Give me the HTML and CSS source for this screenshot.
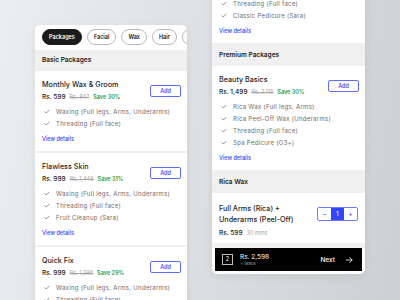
FILE: index.html
```html
<!DOCTYPE html>
<html lang="en">
<head>
    <meta charset="UTF-8">
    <meta name="viewport" content="width=device-width, initial-scale=1.0">
    <title>Salon Packages</title>
    <link rel="stylesheet" href="styles.css">
</head>
<body>
<div class="stage">

    <!-- Left screen: package list -->
    <div class="phone phone-left">
        <div class="chips">
            <span class="chip chip-active">Packages</span>
            <span class="chip">Facial</span>
            <span class="chip">Wax</span>
            <span class="chip">Hair</span>
            <span class="chip">Nails</span>
        </div>

        <div class="section-head">Basic Packages</div>

        <div class="pkg">
            <div class="pkg-top">
                <div class="pkg-info">
                    <div class="pkg-name">Monthly Wax &amp; Groom</div>
                    <div class="price"><span class="now">Rs. 599</span><span class="was">Rs. 847</span><span class="save">Save 30%</span></div>
                </div>
                <button class="add">Add</button>
            </div>
            <ul class="items">
                <li><svg class="tick" viewBox="0 0 8 6"><polyline points="1,3 3,5 7,1"/></svg>Waxing (Full legs, Arms, Underarms)</li>
                <li><svg class="tick" viewBox="0 0 8 6"><polyline points="1,3 3,5 7,1"/></svg>Threading (Full face)</li>
            </ul>
            <a class="details" href="#">View details</a>
        </div>

        <div class="pkg">
            <div class="pkg-top">
                <div class="pkg-info">
                    <div class="pkg-name">Flawless Skin</div>
                    <div class="price"><span class="now">Rs. 999</span><span class="was">Rs. 1,446</span><span class="save">Save 31%</span></div>
                </div>
                <button class="add">Add</button>
            </div>
            <ul class="items">
                <li><svg class="tick" viewBox="0 0 8 6"><polyline points="1,3 3,5 7,1"/></svg>Waxing (Full legs, Arms, Underarms)</li>
                <li><svg class="tick" viewBox="0 0 8 6"><polyline points="1,3 3,5 7,1"/></svg>Threading (Full face)</li>
                <li><svg class="tick" viewBox="0 0 8 6"><polyline points="1,3 3,5 7,1"/></svg>Fruit Cleanup (Sara)</li>
            </ul>
            <a class="details" href="#">View details</a>
        </div>

        <div class="pkg">
            <div class="pkg-top">
                <div class="pkg-info">
                    <div class="pkg-name">Quick Fix</div>
                    <div class="price"><span class="now">Rs. 999</span><span class="was">Rs. 1,396</span><span class="save">Save 29%</span></div>
                </div>
                <button class="add">Add</button>
            </div>
            <ul class="items">
                <li><svg class="tick" viewBox="0 0 8 6"><polyline points="1,3 3,5 7,1"/></svg>Waxing (Full legs, Arms, Underarms)</li>
                <li><svg class="tick" viewBox="0 0 8 6"><polyline points="1,3 3,5 7,1"/></svg>Threading (Full face)</li>
                <li><svg class="tick" viewBox="0 0 8 6"><polyline points="1,3 3,5 7,1"/></svg>Classic Pedicure (Sara)</li>
            </ul>
            <a class="details" href="#">View details</a>
        </div>
    </div>

    <!-- Right screen: scrolled down, with cart bar -->
    <div class="phone phone-right">
        <div class="pkg">
            <div class="pkg-top">
                <div class="pkg-info">
                    <div class="pkg-name">Glow Up</div>
                    <div class="price"><span class="now">Rs. 1,199</span><span class="was">Rs. 1,690</span><span class="save">Save 29%</span></div>
                </div>
                <button class="add">Add</button>
            </div>
            <ul class="items">
                <li><svg class="tick" viewBox="0 0 8 6"><polyline points="1,3 3,5 7,1"/></svg>Waxing (Full legs, Arms, Underarms)</li>
                <li><svg class="tick" viewBox="0 0 8 6"><polyline points="1,3 3,5 7,1"/></svg>Threading (Full face)</li>
                <li><svg class="tick" viewBox="0 0 8 6"><polyline points="1,3 3,5 7,1"/></svg>Classic Pedicure (Sara)</li>
            </ul>
            <a class="details" href="#">View details</a>
        </div>

        <div class="section-head">Premium Packages</div>

        <div class="pkg">
            <div class="pkg-top">
                <div class="pkg-info">
                    <div class="pkg-name">Beauty Basics</div>
                    <div class="price"><span class="now">Rs. 1,499</span><span class="was">Rs. 2,115</span><span class="save">Save 30%</span></div>
                </div>
                <button class="add">Add</button>
            </div>
            <ul class="items">
                <li><svg class="tick" viewBox="0 0 8 6"><polyline points="1,3 3,5 7,1"/></svg>Rica Wax (Full legs, Arms)</li>
                <li><svg class="tick" viewBox="0 0 8 6"><polyline points="1,3 3,5 7,1"/></svg>Rica Peel-Off Wax (Underarms)</li>
                <li><svg class="tick" viewBox="0 0 8 6"><polyline points="1,3 3,5 7,1"/></svg>Threading (Full face)</li>
                <li><svg class="tick" viewBox="0 0 8 6"><polyline points="1,3 3,5 7,1"/></svg>Spa Pedicure (O3+)</li>
            </ul>
            <a class="details" href="#">View details</a>
        </div>

        <div class="section-head">Rica Wax</div>

        <div class="service">
            <div class="service-info">
                <div class="service-name">Full Arms (Rica) + Underarms (Peel-Off)</div>
                <div class="price"><span class="now">Rs. 599</span><span class="time">30 mins</span></div>
            </div>
            <div class="stepper">
                <span class="step">&minus;</span>
                <span class="step step-count">1</span>
                <span class="step">+</span>
            </div>
        </div>

        <div class="cart">
            <div class="cart-bar">
                <span class="cart-count">2</span>
                <div class="cart-total">
                    <div class="total">Rs. 2,598</div>
                    <div class="taxes">+ taxes</div>
                </div>
                <span class="next">Next</span>
                <svg class="arrow" viewBox="0 0 10 10"><path d="M1 5h8M5.5 1.5L9 5l-3.5 3.5"/></svg>
            </div>
        </div>
    </div>

</div>
</body>
</html>
```

FILE: styles.css
```css
* {
    box-sizing: border-box;
}
body {
    margin: 0;
    font-family: Inter, "Noto Sans", sans-serif;
    color: #1c1c1c;
}
.stage {
    display: flex;
    gap: 25px;
    height: 300px;
    padding-left: 35px;
    overflow: hidden;
    background: linear-gradient(100deg, #ecedef 0%, #dddfe2 50%, #cdd0d3 100%);
}
.phone {
    flex-shrink: 0;
    background: #fff;
    border-radius: 5px;
    overflow: hidden;
    box-shadow: 0 2px 8px rgba(0, 0, 0, 0.08);
}
.phone-left {
    width: 152px;
    align-self: flex-start;
    margin-top: 25px;
}
.phone-right {
    width: 153px;
    align-self: flex-end;
    margin-bottom: 26px;
}

/* category chips */
.chips {
    display: flex;
    gap: 5px;
    padding: 4px 7px 5px;
    overflow: hidden;
}
.chip {
    flex-shrink: 0;
    height: 16px;
    padding: 0 6px;
    border: 1px solid #b9b9b9;
    border-radius: 8px;
    font-size: 5.5px;
    font-weight: 600;
    line-height: 14px;
    color: #222;
}
.chip-active {
    background: #1b1b1b;
    border-color: #1b1b1b;
    color: #fff;
}

.section-head {
    height: 21px;
    padding-left: 7px;
    background: #f0f0f0;
    font-size: 6.5px;
    font-weight: 600;
    line-height: 21px;
}

/* package block */
.pkg {
    padding: 8px 6px 6px 7px;
    border-bottom: 2px solid #f0f0f0;
}
.pkg-top {
    display: flex;
    align-items: center;
    justify-content: space-between;
}
.pkg-name {
    font-size: 7.2px;
    font-weight: 500;
    line-height: 12px;
}
.price {
    display: flex;
    align-items: baseline;
    gap: 4px;
    line-height: 12px;
}
.now {
    font-size: 6.5px;
    font-weight: 500;
}
.was {
    font-size: 5.5px;
    color: #a5a5a5;
    text-decoration: line-through;
}
.save {
    font-size: 5.5px;
    font-weight: 600;
    color: #2f9a3f;
}
.add {
    width: 31px;
    height: 12px;
    padding: 0;
    border: 1px solid #5b6cff;
    border-radius: 2px;
    background: #fff;
    color: #3246ff;
    font-family: inherit;
    font-size: 5.5px;
    font-weight: 500;
}
.items {
    list-style: none;
    margin: 2px 0 0;
    padding: 0;
}
.items li {
    display: flex;
    align-items: center;
    height: 12px;
    font-size: 6px;
    letter-spacing: 0.3px;
    white-space: nowrap;
    color: #6b6b6b;
}
.tick {
    flex-shrink: 0;
    width: 6px;
    height: 5px;
    margin: 0 6px 0 2px;
    fill: none;
    stroke: #6b6b6b;
    stroke-width: 1;
}
.details {
    display: block;
    margin-top: 4px;
    font-size: 5.5px;
    font-weight: 500;
    line-height: 12px;
    color: #2f45ff;
    text-decoration: none;
}

/* single service with stepper */
.service {
    display: flex;
    justify-content: space-between;
    align-items: flex-start;
    padding: 10px 7px 4px;
}
.service-name {
    max-width: 82px;
    font-size: 7.2px;
    font-weight: 500;
    line-height: 11px;
}
.service .price {
    margin-top: 2px;
}
.time {
    font-size: 5.5px;
    color: #a5a5a5;
}
.stepper {
    display: flex;
    margin-top: 4px;
    border: 1px solid #6b7bff;
    border-radius: 2px;
    overflow: hidden;
}
.step {
    width: 13px;
    height: 12px;
    font-size: 7px;
    line-height: 12px;
    text-align: center;
    color: #3a4dff;
}
.step-count {
    background: #3446ff;
    color: #fff;
    font-size: 5.5px;
    font-weight: 500;
}

/* cart bar */
.cart {
    padding: 0 3px 3px;
    border-top: 5px solid #f2f2f2;
}
.cart-bar {
    display: flex;
    align-items: center;
    height: 23px;
    padding: 0 9px 0 7px;
    background: #000;
    color: #fff;
}
.cart-count {
    width: 11px;
    height: 11px;
    border: 1px solid #bdbdbd;
    font-size: 5.5px;
    line-height: 9px;
    text-align: center;
}
.cart-total {
    flex: 1;
    margin-left: 7px;
}
.total {
    font-size: 6.5px;
    line-height: 8px;
}
.taxes {
    font-size: 4.5px;
    line-height: 6px;
    color: #a8a8a8;
}
.next {
    font-size: 6.5px;
    font-weight: 500;
}
.arrow {
    width: 8px;
    height: 8px;
    margin-left: 10px;
    fill: none;
    stroke: #fff;
    stroke-width: 1;
}
```
